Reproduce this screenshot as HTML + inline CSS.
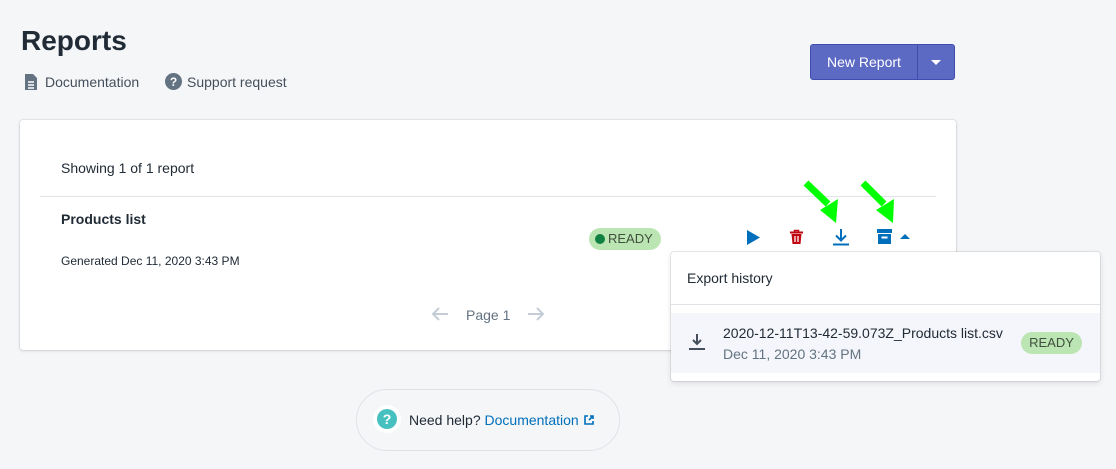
<!DOCTYPE html><html><head><style>
body{margin:0;width:1116px;height:469px;background:#f4f6f8;font-family:"Liberation Sans",sans-serif;position:relative;overflow:hidden;color:#212b36}
.a{position:absolute}
</style></head><body>
<div class="a" style="left:21px;top:25px;font-size:28px;font-weight:bold;color:#212b36">Reports</div>
<svg class="a" style="left:24px;top:73px" width="14" height="18" viewBox="0 0 14 18"><path d="M1 1h8l4 4v12H1z" fill="#637381"/><path d="M4 9h6M4 12h6M4 15h6" stroke="#fff" stroke-width="1.6"/></svg>
<div class="a" style="left:45px;top:74px;font-size:14px;color:#454f5b">Documentation</div>
<svg class="a" style="left:165px;top:73px" width="17" height="17" viewBox="0 0 17 17"><circle cx="8.5" cy="8.5" r="8.5" fill="#637381"/><text x="8.5" y="13" font-size="12" font-weight="bold" fill="#fff" text-anchor="middle" font-family="Liberation Sans">?</text></svg>
<div class="a" style="left:187px;top:74px;font-size:14px;color:#454f5b">Support request</div>
<div class="a" style="left:810px;top:44px;width:145px;height:36px;background:#5c6ac4;border:1px solid #3f4eae;border-radius:3px;box-sizing:border-box"></div>
<div class="a" style="left:917px;top:45px;width:1px;height:34px;background:#3f4eae"></div>
<div class="a" style="left:827px;top:54px;font-size:14px;color:#fff">New Report</div>
<div class="a" style="left:931px;top:60px;border-left:5px solid transparent;border-right:5px solid transparent;border-top:5px solid #fff"></div>
<div class="a" style="left:20px;top:120px;width:936px;height:230px;background:#fff;border-radius:3px;box-shadow:0 0 0 1px rgba(63,63,68,.08),0 1px 3px rgba(63,63,68,.15)"></div>
<div class="a" style="left:61px;top:160px;font-size:14px">Showing 1 of 1 report</div>
<div class="a" style="left:40px;top:196px;width:896px;height:1px;background:#dfe3e8"></div>
<div class="a" style="left:61px;top:211px;font-size:14px;font-weight:bold">Products list</div>
<div class="a" style="left:61px;top:254px;font-size:12px">Generated Dec 11, 2020 3:43 PM</div>
<div class="a" style="left:589px;top:228px;width:72px;height:22px;background:#bbe5b3;border-radius:11px"></div>
<div class="a" style="left:595px;top:234px;width:10px;height:10px;border-radius:5px;background:#108043"></div>
<div class="a" style="left:608px;top:231px;font-size:13px;color:#414f3e">READY</div>
<svg class="a" style="left:746px;top:230px" width="14" height="15"><path d="M1 0L14 7.5L1 15z" fill="#006fbb"/></svg>
<svg class="a" style="left:789px;top:229px" width="15" height="16"><path d="M1 3.5h13" stroke="#bf0711" stroke-width="2"/><path d="M5.5 3V1.5h4V3" stroke="#bf0711" stroke-width="1.5" fill="none"/><path d="M2.5 5h10l-1 10h-8z" fill="#bf0711"/><path d="M6 7v6M9 7v6" stroke="#fff" stroke-width="1.3"/></svg>
<svg class="a" style="left:832px;top:228px" width="18" height="18"><path d="M9 1v11M4 7.5l5 5 5-5" stroke="#006fbb" stroke-width="2" fill="none"/><path d="M1 16.5h16" stroke="#006fbb" stroke-width="2"/></svg>
<svg class="a" style="left:877px;top:229px" width="15" height="15"><rect x="0" y="0" width="15" height="4" fill="#006fbb"/><rect x="1" y="5" width="13" height="10" fill="#006fbb"/><rect x="4.5" y="7.5" width="6" height="2" fill="#fff"/></svg>
<div class="a" style="left:900px;top:234px;border-left:5px solid transparent;border-right:5px solid transparent;border-bottom:5px solid #006fbb"></div>
<svg class="a" style="left:800px;top:180px" width="100" height="50"><path d="M6 3L28 24" stroke="#00ff00" stroke-width="7"/><path d="M36 43L20 30L38 19z" fill="#00ff00"/><path d="M63 3L84 24" stroke="#00ff00" stroke-width="7"/><path d="M93 43L76 30L94 19z" fill="#00ff00"/></svg>
<div class="a" style="left:466px;top:307px;font-size:14px;color:#637381">Page 1</div>
<svg class="a" style="left:431px;top:307px" width="18" height="14"><path d="M17 7H2M8 1L2 7l6 6" stroke="#c4cdd5" stroke-width="2" fill="none"/></svg>
<svg class="a" style="left:527px;top:307px" width="18" height="14"><path d="M1 7h15M10 1l6 6-6 6" stroke="#c4cdd5" stroke-width="2" fill="none"/></svg>
<div class="a" style="left:671px;top:252px;width:429px;height:129px;background:#fff;border-radius:3px;box-shadow:0 0 0 1px rgba(63,63,68,.1),0 2px 6px rgba(63,63,68,.15)"></div>
<div class="a" style="left:687px;top:270px;font-size:14px">Export history</div>
<div class="a" style="left:671px;top:304px;width:429px;height:1px;background:#dfe3e8"></div>
<div class="a" style="left:671px;top:313px;width:429px;height:60px;background:#f4f6fb"></div>
<svg class="a" style="left:688px;top:333px" width="18" height="18"><path d="M9 1v10M5 7l4 4 4-4" stroke="#454f5b" stroke-width="2" fill="none"/><path d="M1 16h16" stroke="#454f5b" stroke-width="2"/></svg>
<div class="a" style="left:723px;top:325px;font-size:14px">2020-12-11T13-42-59.073Z_Products list.csv</div>
<div class="a" style="left:723px;top:346px;font-size:14px;color:#637381">Dec 11, 2020 3:43 PM</div>
<div class="a" style="left:1021px;top:332px;width:61px;height:22px;background:#bbe5b3;border-radius:11px;font-size:13px;color:#414f3e;text-align:center;line-height:22px">READY</div>
<div class="a" style="left:356px;top:389px;width:264px;height:62px;border:1px solid #dfe3e8;border-radius:31px;box-sizing:border-box"></div>
<div class="a" style="left:373px;top:405px;width:28px;height:28px;border-radius:14px;background:#fff"></div>
<svg class="a" style="left:377px;top:409px" width="20" height="20"><circle cx="10" cy="10" r="10" fill="#47c1bf"/><text x="10" y="15" font-size="14" font-weight="bold" fill="#fff" text-anchor="middle" font-family="Liberation Sans">?</text></svg>
<div class="a" style="left:409px;top:412px;font-size:14px">Need help? <span style="color:#006fbb">Documentation</span></div>
<svg class="a" style="left:584px;top:415px" width="10" height="10"><path d="M4 1H1v8h8V6" stroke="#006fbb" stroke-width="1.6" fill="none"/><path d="M5 5l4-4M6 1h3v3" stroke="#006fbb" stroke-width="1.6" fill="none"/></svg>
</body></html>
